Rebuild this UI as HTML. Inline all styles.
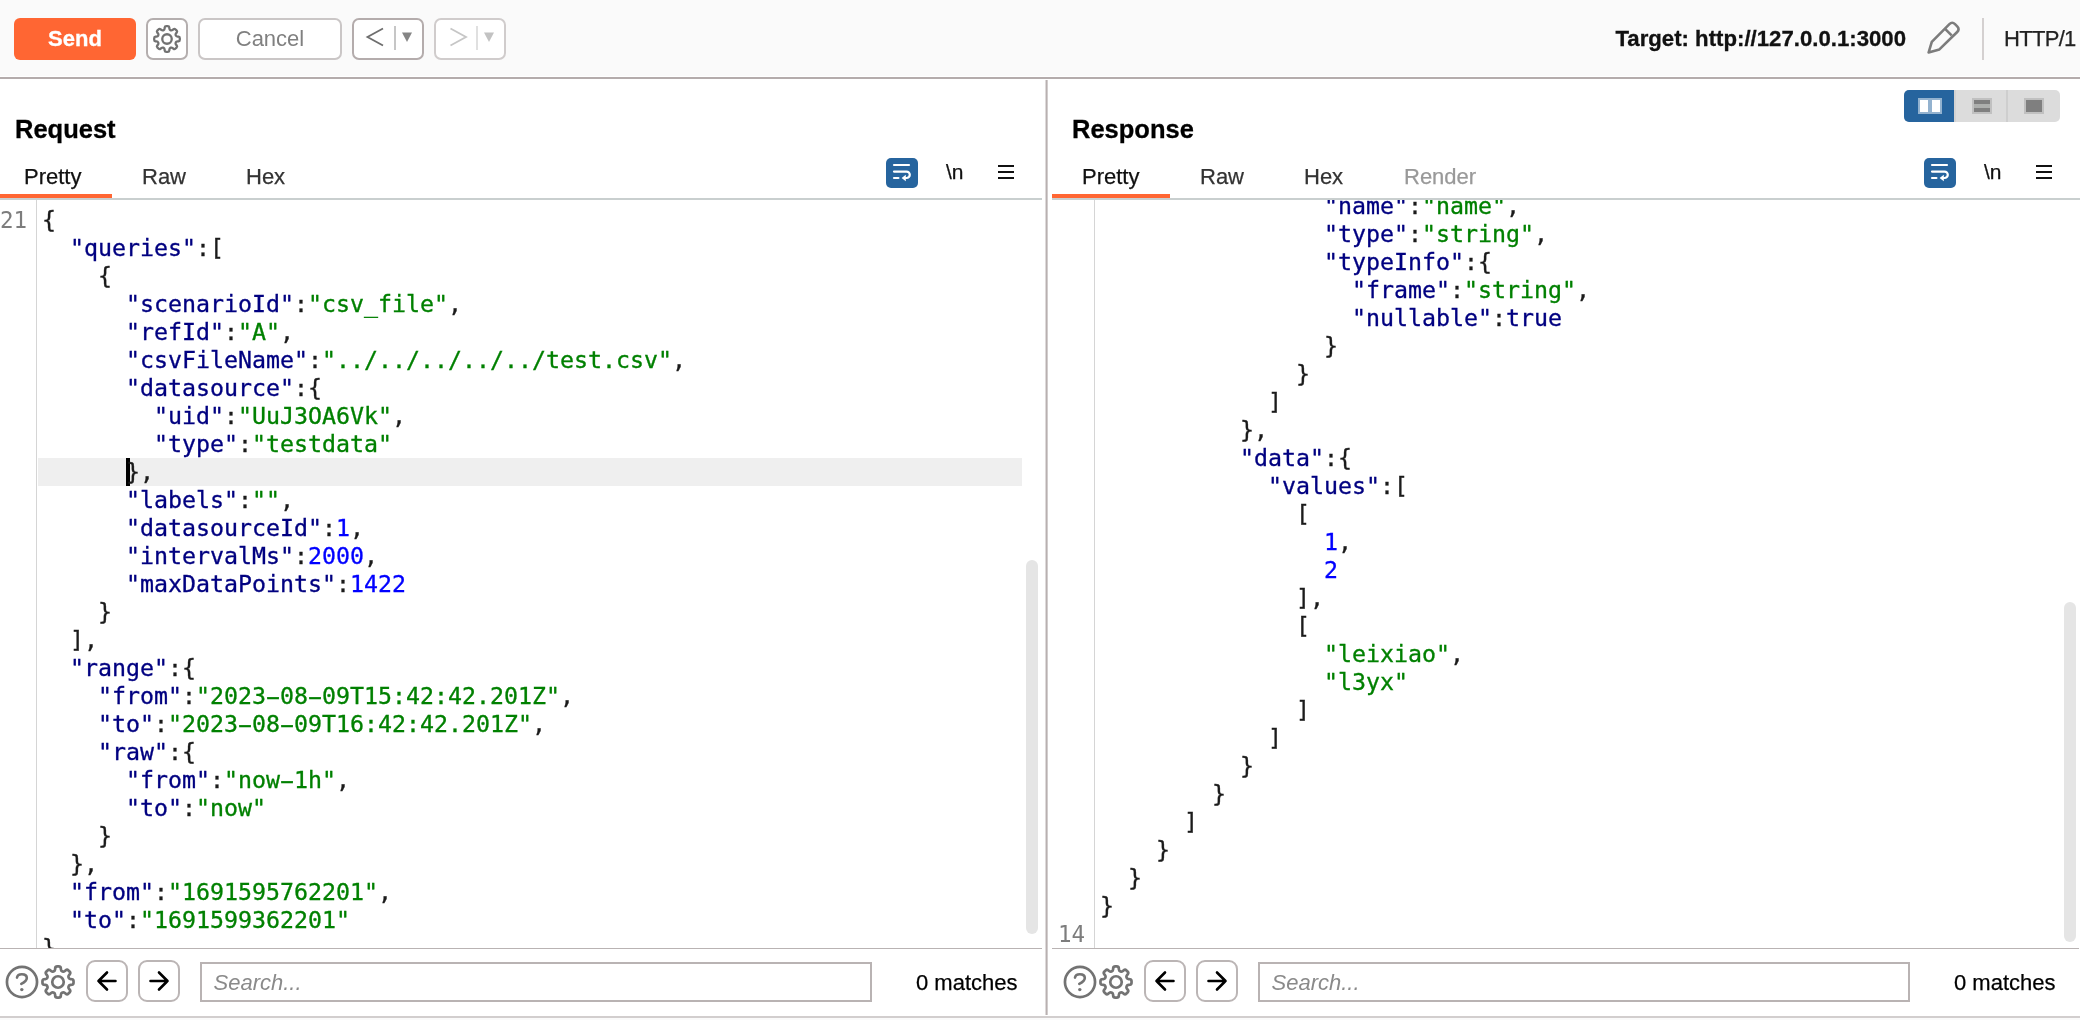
<!DOCTYPE html>
<html lang="en">
<head>
<meta charset="utf-8">
<title>Repeater</title>
<style>
*{box-sizing:border-box;margin:0;padding:0}
html,body{width:2080px;height:1020px;overflow:hidden;background:#fff}
body{position:relative;font-family:"Liberation Sans",sans-serif;color:#111}
.abs{position:absolute}
#toolbar{left:0;top:0;width:2080px;height:76px;background:#fafafa}
#tbline{left:0;top:77px;width:2080px;height:2px;background:#b4acac}
.btn{position:absolute;top:18px;height:42px;border:2px solid #cac6c6;border-radius:7px;background:#fff;font-size:22px;color:#808080;text-align:center;line-height:38px}
#send{left:14px;width:122px;background:#ff6633;border:none;color:#fff;font-weight:bold;font-size:22px;line-height:41px;border-radius:6px}
#gearbtn{left:146px;width:42px;border-color:#b4aeae}
#cancel{left:198px;width:144px}
#prev{left:352px;width:72px;border-color:#b4acac}
#next{left:434px;width:72px;border-color:#d0cccc}
#target{right:174px;top:26px;font-weight:bold;font-size:22.2px;line-height:26px;color:#111;white-space:nowrap}
#sep{left:1982px;top:18px;width:2px;height:42px;background:#d4d0d0}
#http{left:2004px;top:26px;font-size:22px;letter-spacing:-0.7px;line-height:26px;color:#222;white-space:nowrap}
.title{font-weight:bold;font-size:25.5px;line-height:30px;top:114px;margin-left:-0.5px;color:#000}
.tab{font-size:22px;line-height:26px;top:164px;color:#333}
.tab.sel{color:#111}
.tab.dis{color:#999}
.uline{height:4px;top:194px;background:#ff6633}
.hline{height:2px;top:198px;background:#c9cfcf}
.vline{width:1px;background:#d5d5d5;top:200px;height:748px}
.code{font-family:"DejaVu Sans Mono","Liberation Mono",monospace;font-size:23.25px;line-height:28px;color:#1b1b1b;overflow:hidden}
.code div{height:28px;white-space:pre}
.code{-webkit-text-stroke:0.32px currentColor}
.h{display:inline-block;transform:scaleX(1.9)}
.k{color:#000080}.s{color:#008000}.n{color:#0000ff}
.ln{font-family:"DejaVu Sans Mono","Liberation Mono",monospace;font-size:22.5px;line-height:28px;color:#7d7d7d}
.thumb{width:12px;border-radius:6px;background:#e5e5e5}
.wrapbtn{width:32px;height:30px;top:158px;border-radius:5px;background:#26649e}
.nl{font-size:21px;line-height:26px;top:159px;margin-left:1px;color:#111}
.ham{top:165px;width:16px;height:15px}
.ham i{position:absolute;left:0;width:16px;height:2px;background:#111}
.botline{height:1px;top:948px;background:#b9b3b3}
.sbtn{width:42px;height:42px;top:960px;border:2px solid #bbb5b5;border-radius:9px;background:#fff}
.search{height:40px;top:962px;border:2px solid #b9b3b3;background:#fff;font-style:italic;font-size:22px;line-height:37px;color:#8a8a8a;padding-left:11.5px}
.matches{font-size:22px;line-height:26px;top:970px;color:#000;white-space:nowrap}
.matches,.tab,.nl,#http{-webkit-text-stroke:0.25px currentColor}
#target,.title,#send{-webkit-text-stroke:0.3px currentColor}
svg{position:absolute;overflow:visible}
body>div{will-change:transform}
</style>
</head>
<body>
<div id="toolbar" class="abs">
  <div id="send" class="btn">Send</div>
  <div id="gearbtn" class="btn"></div>
  <div id="cancel" class="btn">Cancel</div>
  <div id="prev" class="btn"></div>
  <div id="next" class="btn"></div>
  <div id="target" class="abs">Target: http://127.0.0.1:3000</div>
  <div id="sep" class="abs"></div>
  <div id="http" class="abs">HTTP/1</div>
</div>

<div id="tbline" class="abs"></div>

<!-- REQUEST PANEL -->
<div class="abs title" style="left:15px">Request</div>
<div class="abs tab sel" style="left:24px">Pretty</div>
<div class="abs tab" style="left:142px">Raw</div>
<div class="abs tab" style="left:246px">Hex</div>
<div class="abs hline" style="left:0;width:1042px"></div>
<div class="abs uline" style="left:0;width:112px"></div>
<div class="abs wrapbtn" style="left:886px"></div>
<div class="abs nl" style="left:945px">\n</div>
<div class="abs ham" style="left:998px"><i style="top:0"></i><i style="top:6px"></i><i style="top:12px"></i></div>

<div class="abs vline" style="left:36px"></div>
<div class="abs" style="left:38px;top:458px;width:984px;height:28px;background:#efefef"></div>
<div class="abs" style="left:126px;top:458px;width:4px;height:28px;background:#000"></div>
<div class="abs ln" style="left:0;top:206px">21</div>
<div class="abs code" id="reqcode" style="left:42px;top:206px;width:980px;height:742px">
<div>{</div>
<div>  <span class="k">"queries"</span>:[</div>
<div>    {</div>
<div>      <span class="k">"scenarioId"</span>:<span class="s">"csv_file"</span>,</div>
<div>      <span class="k">"refId"</span>:<span class="s">"A"</span>,</div>
<div>      <span class="k">"csvFileName"</span>:<span class="s">"../../../../../test.csv"</span>,</div>
<div>      <span class="k">"datasource"</span>:{</div>
<div>        <span class="k">"uid"</span>:<span class="s">"UuJ3OA6Vk"</span>,</div>
<div>        <span class="k">"type"</span>:<span class="s">"testdata"</span></div>
<div>      },</div>
<div>      <span class="k">"labels"</span>:<span class="s">""</span>,</div>
<div>      <span class="k">"datasourceId"</span>:<span class="n">1</span>,</div>
<div>      <span class="k">"intervalMs"</span>:<span class="n">2000</span>,</div>
<div>      <span class="k">"maxDataPoints"</span>:<span class="n">1422</span></div>
<div>    }</div>
<div>  ],</div>
<div>  <span class="k">"range"</span>:{</div>
<div>    <span class="k">"from"</span>:<span class="s">"2023<span class="h">-</span>08<span class="h">-</span>09T15:42:42.201Z"</span>,</div>
<div>    <span class="k">"to"</span>:<span class="s">"2023<span class="h">-</span>08<span class="h">-</span>09T16:42:42.201Z"</span>,</div>
<div>    <span class="k">"raw"</span>:{</div>
<div>      <span class="k">"from"</span>:<span class="s">"now<span class="h">-</span>1h"</span>,</div>
<div>      <span class="k">"to"</span>:<span class="s">"now"</span></div>
<div>    }</div>
<div>  },</div>
<div>  <span class="k">"from"</span>:<span class="s">"1691595762201"</span>,</div>
<div>  <span class="k">"to"</span>:<span class="s">"1691599362201"</span></div>
<div>}</div>
</div>
<div class="abs thumb" style="left:1026px;top:560px;height:374px"></div>
<div class="abs botline" style="left:0;width:1042px"></div>
<div class="abs sbtn" style="left:86px"></div>
<div class="abs sbtn" style="left:138px"></div>
<div class="abs search" style="left:200px;width:672px">Search...</div>
<div class="abs matches" style="left:916px">0 matches</div>

<!-- DIVIDER -->
<div class="abs" style="left:1045px;top:80px;width:3px;height:935px;background:linear-gradient(90deg,#ddd9d9 0,#ddd9d9 33.3%,#b8b0b0 33.3%,#b8b0b0 66.6%,#d2cdcd 66.6%)"></div>

<!-- RESPONSE PANEL -->
<div class="abs title" style="left:1072px">Response</div>
<div class="abs tab sel" style="left:1082px">Pretty</div>
<div class="abs tab" style="left:1200px">Raw</div>
<div class="abs tab" style="left:1304px">Hex</div>
<div class="abs tab dis" style="left:1404px">Render</div>
<div class="abs hline" style="left:1052px;width:1028px"></div>
<div class="abs uline" style="left:1052px;width:118px"></div>
<div class="abs wrapbtn" style="left:1924px"></div>
<div class="abs nl" style="left:1983px">\n</div>
<div class="abs ham" style="left:2036px"><i style="top:0"></i><i style="top:6px"></i><i style="top:12px"></i></div>

<div class="abs vline" style="left:1094px"></div>
<div class="abs code" id="rescode" style="left:1100px;top:200px;width:960px;height:748px">
<div style="margin-top:-8px">                <span class="k">"name"</span>:<span class="s">"name"</span>,</div>
<div>                <span class="k">"type"</span>:<span class="s">"string"</span>,</div>
<div>                <span class="k">"typeInfo"</span>:{</div>
<div>                  <span class="k">"frame"</span>:<span class="s">"string"</span>,</div>
<div>                  <span class="k">"nullable"</span>:<span class="k">true</span></div>
<div>                }</div>
<div>              }</div>
<div>            ]</div>
<div>          },</div>
<div>          <span class="k">"data"</span>:{</div>
<div>            <span class="k">"values"</span>:[</div>
<div>              [</div>
<div>                <span class="n">1</span>,</div>
<div>                <span class="n">2</span></div>
<div>              ],</div>
<div>              [</div>
<div>                <span class="s">"leixiao"</span>,</div>
<div>                <span class="s">"l3yx"</span></div>
<div>              ]</div>
<div>            ]</div>
<div>          }</div>
<div>        }</div>
<div>      ]</div>
<div>    }</div>
<div>  }</div>
<div>}</div>
</div>
<div class="abs ln" style="left:1057.5px;top:920px">14</div>
<div class="abs thumb" style="left:2064px;top:602px;height:340px"></div>
<div class="abs botline" style="left:1052px;width:1027px"></div>
<div class="abs sbtn" style="left:1144px"></div>
<div class="abs sbtn" style="left:1196px"></div>
<div class="abs search" style="left:1258px;width:652px">Search...</div>
<div class="abs matches" style="left:1954px">0 matches</div>

<!-- BOTTOM -->
<div class="abs" style="left:0;top:1016px;width:2080px;height:2px;background:#d2cece"></div>
<div class="abs" style="left:0;top:1018px;width:2080px;height:2px;background:#fafafa"></div>
<svg class="abs" id="icons" width="2080" height="1020" viewBox="0 0 2080 1020" style="left:0;top:0;will-change:transform;pointer-events:none">
<path d="M163.69 30.11Q164.45 29.79 164.59 28.54L164.71 27.46Q164.86 26.21 166.36 26.21L167.64 26.21Q169.14 26.21 169.29 27.46L169.41 28.54Q169.55 29.79 170.31 30.11L170.95 30.37Q171.70 30.69 172.69 29.90L173.54 29.23Q174.53 28.44 175.59 29.50L176.50 30.41Q177.56 31.47 176.77 32.46L176.10 33.31Q175.31 34.30 175.63 35.05L175.89 35.69Q176.21 36.45 177.46 36.59L178.54 36.71Q179.79 36.86 179.79 38.36L179.79 39.64Q179.79 41.14 178.54 41.29L177.46 41.41Q176.21 41.55 175.89 42.31L175.63 42.95Q175.31 43.70 176.10 44.69L176.77 45.54Q177.56 46.53 176.50 47.59L175.59 48.50Q174.53 49.56 173.54 48.77L172.69 48.10Q171.70 47.31 170.95 47.63L170.31 47.89Q169.55 48.21 169.41 49.46L169.29 50.54Q169.14 51.79 167.64 51.79L166.36 51.79Q164.86 51.79 164.71 50.54L164.59 49.46Q164.45 48.21 163.69 47.89L163.05 47.63Q162.30 47.31 161.31 48.10L160.46 48.77Q159.47 49.56 158.41 48.50L157.50 47.59Q156.44 46.53 157.23 45.54L157.90 44.69Q158.69 43.70 158.37 42.95L158.11 42.31Q157.79 41.55 156.54 41.41L155.46 41.29Q154.21 41.14 154.21 39.64L154.21 38.36Q154.21 36.86 155.46 36.71L156.54 36.59Q157.79 36.45 158.11 35.69L158.37 35.05Q158.69 34.30 157.90 33.31L157.23 32.46Q156.44 31.47 157.50 30.41L158.41 29.50Q159.47 28.44 160.46 29.23L161.31 29.90Q162.30 30.69 163.05 30.37Z" fill="none" stroke="#727272" stroke-width="2.3" stroke-linejoin="round"/><circle cx="167" cy="39" r="4.74" fill="none" stroke="#727272" stroke-width="2.3"/>
<path d="M383 28.5L367.5 37L383 45.5" fill="none" stroke="#6e6e6e" stroke-width="1.8"/><rect x="394" y="26" width="2" height="24" fill="#c6c6c6"/><path d="M402 32.6H412L407 42Z" fill="#858585"/>
<path d="M450.5 28.5L466 37L450.5 45.5" fill="none" stroke="#c6c6c6" stroke-width="1.8"/><rect x="476" y="26" width="2" height="24" fill="#e0e0e0"/><path d="M484 32.6H494L489 42Z" fill="#c2c2c2"/>
<path d="M1928.6 52.5L1931.8 41.8L1949.4 24.2Q1952.2 21.4 1955 24.2L1957.2 26.4Q1960 29.2 1957.2 32L1939.4 49.4Z M1945.6 29.4L1951.6 35.4" fill="none" stroke="#7c7c7c" stroke-width="2.6" stroke-linejoin="round"/>
<rect x="1904" y="90" width="156" height="32" rx="5" fill="#dcdcdc"/>
<path d="M1909 90H1954V122H1909A5 5 0 0 1 1904 117V95A5 5 0 0 1 1909 90Z" fill="#26649e"/>
<rect x="1954" y="90" width="2" height="32" fill="#d2d2d2"/><rect x="2006" y="90" width="2" height="32" fill="#cecece"/>
<rect x="1918" y="98" width="24" height="16" fill="#fff" fill-opacity="0.5"/><rect x="1920" y="100" width="8" height="12" fill="#fff"/><rect x="1932" y="100" width="8" height="12" fill="#fff"/>
<rect x="1972" y="98" width="20" height="16" fill="#808080" fill-opacity="0.3"/><rect x="1974" y="100" width="16" height="12" fill="#adafad"/><rect x="1974" y="100" width="16" height="4" fill="#7f7f7f"/><rect x="1974" y="108" width="16" height="4" fill="#7f7f7f"/>
<rect x="2024" y="98" width="20" height="16" fill="#808080" fill-opacity="0.3"/><rect x="2026" y="100" width="16" height="12" fill="#7f7f7f"/>
<g transform="translate(886,158)" fill="none" stroke="#fff" stroke-width="2.2" stroke-linecap="round"><path d="M8 7H23"/><path d="M8 13.6H20.6A3.2 3.2 0 0 1 20.6 20H19"/><path d="M8 20H12.4"/><path d="M15.6 20L19.8 16.8V23.2Z" fill="#fff" stroke="none"/></g>
<g transform="translate(1924,158)" fill="none" stroke="#fff" stroke-width="2.2" stroke-linecap="round"><path d="M8 7H23"/><path d="M8 13.6H20.6A3.2 3.2 0 0 1 20.6 20H19"/><path d="M8 20H12.4"/><path d="M15.6 20L19.8 16.8V23.2Z" fill="#fff" stroke="none"/></g>
<circle cx="22" cy="982" r="15.05" fill="none" stroke="#737373" stroke-width="2.7"/><path d="M17 977.6Q17.6 974.2 21.8 974.2Q26.8 974.2 26.8 978Q26.8 981 21.3 983.9" fill="none" stroke="#737373" stroke-width="2.6" stroke-linecap="round"/><circle cx="21.8" cy="989.6" r="1.7" fill="#737373"/>
<path d="M53.99 971.20Q54.90 970.82 55.08 969.30L55.23 967.99Q55.40 966.47 57.22 966.47L58.78 966.47Q60.60 966.47 60.77 967.99L60.92 969.30Q61.10 970.82 62.01 971.20L62.80 971.53Q63.71 971.90 64.91 970.95L65.94 970.13Q67.15 969.18 68.43 970.46L69.54 971.57Q70.82 972.85 69.87 974.06L69.05 975.09Q68.10 976.29 68.47 977.20L68.80 977.99Q69.18 978.90 70.70 979.08L72.01 979.23Q73.53 979.40 73.53 981.22L73.53 982.78Q73.53 984.60 72.01 984.77L70.70 984.92Q69.18 985.10 68.80 986.01L68.47 986.80Q68.10 987.71 69.05 988.91L69.87 989.94Q70.82 991.15 69.54 992.43L68.43 993.54Q67.15 994.82 65.94 993.87L64.91 993.05Q63.71 992.10 62.80 992.47L62.01 992.80Q61.10 993.18 60.92 994.70L60.77 996.01Q60.60 997.53 58.78 997.53L57.22 997.53Q55.40 997.53 55.23 996.01L55.08 994.70Q54.90 993.18 53.99 992.80L53.20 992.47Q52.29 992.10 51.09 993.05L50.06 993.87Q48.85 994.82 47.57 993.54L46.46 992.43Q45.18 991.15 46.13 989.94L46.95 988.91Q47.90 987.71 47.53 986.80L47.20 986.01Q46.82 985.10 45.30 984.92L43.99 984.77Q42.47 984.60 42.47 982.78L42.47 981.22Q42.47 979.40 43.99 979.23L45.30 979.08Q46.82 978.90 47.20 977.99L47.53 977.20Q47.90 976.29 46.95 975.09L46.13 974.06Q45.18 972.85 46.46 971.57L47.57 970.46Q48.85 969.18 50.06 970.13L51.09 970.95Q52.29 971.90 53.20 971.53Z" fill="none" stroke="#737373" stroke-width="2.7" stroke-linejoin="round"/><circle cx="58" cy="982" r="5.75" fill="none" stroke="#737373" stroke-width="2.7"/>
<path d="M115.5 981L98.5 981M107.0 972.5L98.5 981L107.0 989.5" fill="none" stroke="#000" stroke-width="2.6" stroke-linecap="round" stroke-linejoin="round"/>
<path d="M150.5 981L167.5 981M159.0 972.5L167.5 981L159.0 989.5" fill="none" stroke="#000" stroke-width="2.6" stroke-linecap="round" stroke-linejoin="round"/>
<circle cx="1080" cy="982" r="15.05" fill="none" stroke="#737373" stroke-width="2.7"/><path d="M1075 977.6Q1075.6 974.2 1079.8 974.2Q1084.8 974.2 1084.8 978Q1084.8 981 1079.3 983.9" fill="none" stroke="#737373" stroke-width="2.6" stroke-linecap="round"/><circle cx="1079.8" cy="989.6" r="1.7" fill="#737373"/>
<path d="M1111.99 971.20Q1112.90 970.82 1113.08 969.30L1113.23 967.99Q1113.40 966.47 1115.22 966.47L1116.78 966.47Q1118.60 966.47 1118.77 967.99L1118.92 969.30Q1119.10 970.82 1120.01 971.20L1120.80 971.53Q1121.71 971.90 1122.91 970.95L1123.94 970.13Q1125.15 969.18 1126.43 970.46L1127.54 971.57Q1128.82 972.85 1127.87 974.06L1127.05 975.09Q1126.10 976.29 1126.47 977.20L1126.80 977.99Q1127.18 978.90 1128.70 979.08L1130.01 979.23Q1131.53 979.40 1131.53 981.22L1131.53 982.78Q1131.53 984.60 1130.01 984.77L1128.70 984.92Q1127.18 985.10 1126.80 986.01L1126.47 986.80Q1126.10 987.71 1127.05 988.91L1127.87 989.94Q1128.82 991.15 1127.54 992.43L1126.43 993.54Q1125.15 994.82 1123.94 993.87L1122.91 993.05Q1121.71 992.10 1120.80 992.47L1120.01 992.80Q1119.10 993.18 1118.92 994.70L1118.77 996.01Q1118.60 997.53 1116.78 997.53L1115.22 997.53Q1113.40 997.53 1113.23 996.01L1113.08 994.70Q1112.90 993.18 1111.99 992.80L1111.20 992.47Q1110.29 992.10 1109.09 993.05L1108.06 993.87Q1106.85 994.82 1105.57 993.54L1104.46 992.43Q1103.18 991.15 1104.13 989.94L1104.95 988.91Q1105.90 987.71 1105.53 986.80L1105.20 986.01Q1104.82 985.10 1103.30 984.92L1101.99 984.77Q1100.47 984.60 1100.47 982.78L1100.47 981.22Q1100.47 979.40 1101.99 979.23L1103.30 979.08Q1104.82 978.90 1105.20 977.99L1105.53 977.20Q1105.90 976.29 1104.95 975.09L1104.13 974.06Q1103.18 972.85 1104.46 971.57L1105.57 970.46Q1106.85 969.18 1108.06 970.13L1109.09 970.95Q1110.29 971.90 1111.20 971.53Z" fill="none" stroke="#737373" stroke-width="2.7" stroke-linejoin="round"/><circle cx="1116" cy="982" r="5.75" fill="none" stroke="#737373" stroke-width="2.7"/>
<path d="M1173.5 981L1156.5 981M1165.0 972.5L1156.5 981L1165.0 989.5" fill="none" stroke="#000" stroke-width="2.6" stroke-linecap="round" stroke-linejoin="round"/>
<path d="M1208.5 981L1225.5 981M1217.0 972.5L1225.5 981L1217.0 989.5" fill="none" stroke="#000" stroke-width="2.6" stroke-linecap="round" stroke-linejoin="round"/>
</svg>
</body>
</html>
